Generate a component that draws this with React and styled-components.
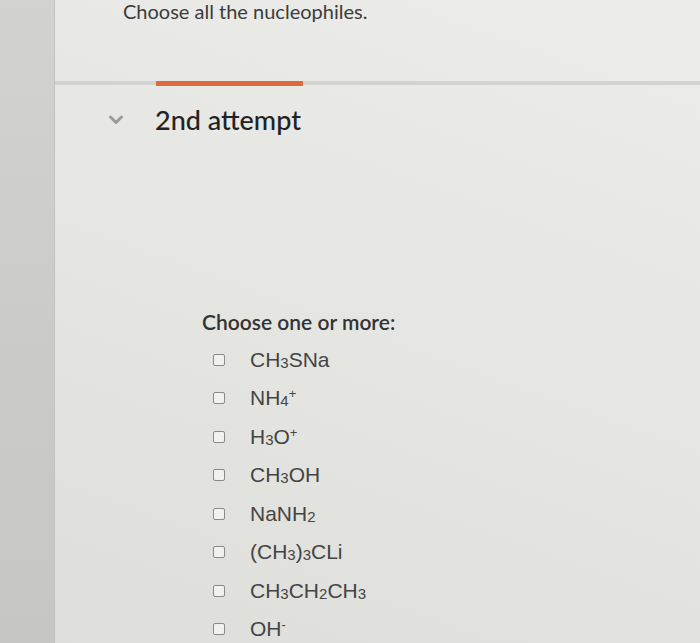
import React from "react";
import styled, { createGlobalStyle } from "styled-components";

const Global = createGlobalStyle`
  html, body { margin: 0; padding: 0; }
  body { width: 700px; height: 643px; overflow: hidden; background: #d9d9d5; }
`;

const Page = styled.div`
  display: flex;
  width: 700px;
  height: 643px;
  overflow: hidden;
`;

const LeftStrip = styled.div`
  width: 54px;
  flex: none;
  background: linear-gradient(180deg, #d2d2ce 0%, #cacac6 60%, #c6c6c2 100%);
  border-right: 1px solid #c2c2be;
`;

const Main = styled.div`
  flex: 1;
  display: flex;
  flex-direction: column;
  background: linear-gradient(200deg, #ececea 0%, #e6e6e3 45%, #dededa 100%);
`;

const Prompt = styled.div`
  font-family: Lato, "Open Sans", sans-serif;
  font-size: 20px;
  color: #3b3b3b;
  padding-left: 68px;
  line-height: 22px;
`;

const Divider = styled.div`
  margin-top: 59px;
  height: 4px;
  background: #d3d3cf;
  display: flex;
  align-items: center;
`;

const ProgressBar = styled.div`
  margin-left: 101px;
  width: 147px;
  height: 5px;
  background: #dc6c3c;
`;

const AttemptRow = styled.div`
  display: flex;
  align-items: center;
  margin-top: 19px;
  padding-left: 54px;
  gap: 32px;
`;

const Chevron = styled.svg`
  width: 14px;
  height: 10px;
  flex: none;
`;

const AttemptTitle = styled.div`
  font-family: Lato, "Open Sans", sans-serif;
  font-size: 27px;
  font-weight: 500;
  color: #222;
  line-height: 32px;
`;

const Question = styled.div`
  margin-top: 173px;
  padding-left: 147px;
  display: flex;
  flex-direction: column;
`;

const Instruction = styled.div`
  font-family: Lato, "Open Sans", sans-serif;
  font-size: 21px;
  font-weight: 600;
  color: #333;
  line-height: 26px;
  margin-bottom: 12px;
`;

const Options = styled.div`
  display: flex;
  flex-direction: column;
  gap: 13px;
  padding-left: 11px;
`;

const Option = styled.label`
  display: flex;
  align-items: center;
  gap: 25px;
  height: 25.5px;
  font-family: "Liberation Sans", Arial, sans-serif;
  font-size: 21px;
  color: #444;
`;

const Box = styled.span`
  width: 10px;
  height: 10px;
  border: 1.5px solid #8a8a86;
  border-radius: 2px;
  background: #f1f1ee;
  flex: none;
`;

const Small = styled.span`
  font-size: ${(p) => (p.$sup ? "13px" : "15px")};
  vertical-align: ${(p) => (p.$sup ? "7px" : "-1px")};
`;

const options = [
  ["CH", ["3"], "SNa"],
  ["NH", ["4"], ["+", true]],
  ["H", ["3"], "O", ["+", true]],
  ["CH", ["3"], "OH"],
  ["NaNH", ["2"]],
  ["(CH", ["3"], ")", ["3"], "CLi"],
  ["CH", ["3"], "CH", ["2"], "CH", ["3"]],
  ["OH", ["-", true]],
];

export default function App() {
  return (
    <Page>
      <Global />
      <LeftStrip />
      <Main>
        <Prompt>Choose all the nucleophiles.</Prompt>
        <Divider>
          <ProgressBar />
        </Divider>
        <AttemptRow>
          <Chevron viewBox="0 0 14 10">
            <path d="M1.5 2 L7 7.5 L12.5 2" fill="none" stroke="#9a9a96" strokeWidth="3" strokeLinecap="round" strokeLinejoin="round" />
          </Chevron>
          <AttemptTitle>2nd attempt</AttemptTitle>
        </AttemptRow>
        <Question>
          <Instruction>Choose one or more:</Instruction>
          <Options>
            {options.map((parts, i) => (
              <Option key={i}>
                <Box />
                <span>
                  {parts.map((p, j) =>
                    typeof p === "string" ? (
                      <React.Fragment key={j}>{p}</React.Fragment>
                    ) : (
                      <Small key={j} $sup={p[1]}>{p[0]}</Small>
                    )
                  )}
                </span>
              </Option>
            ))}
          </Options>
        </Question>
      </Main>
    </Page>
  );
}
